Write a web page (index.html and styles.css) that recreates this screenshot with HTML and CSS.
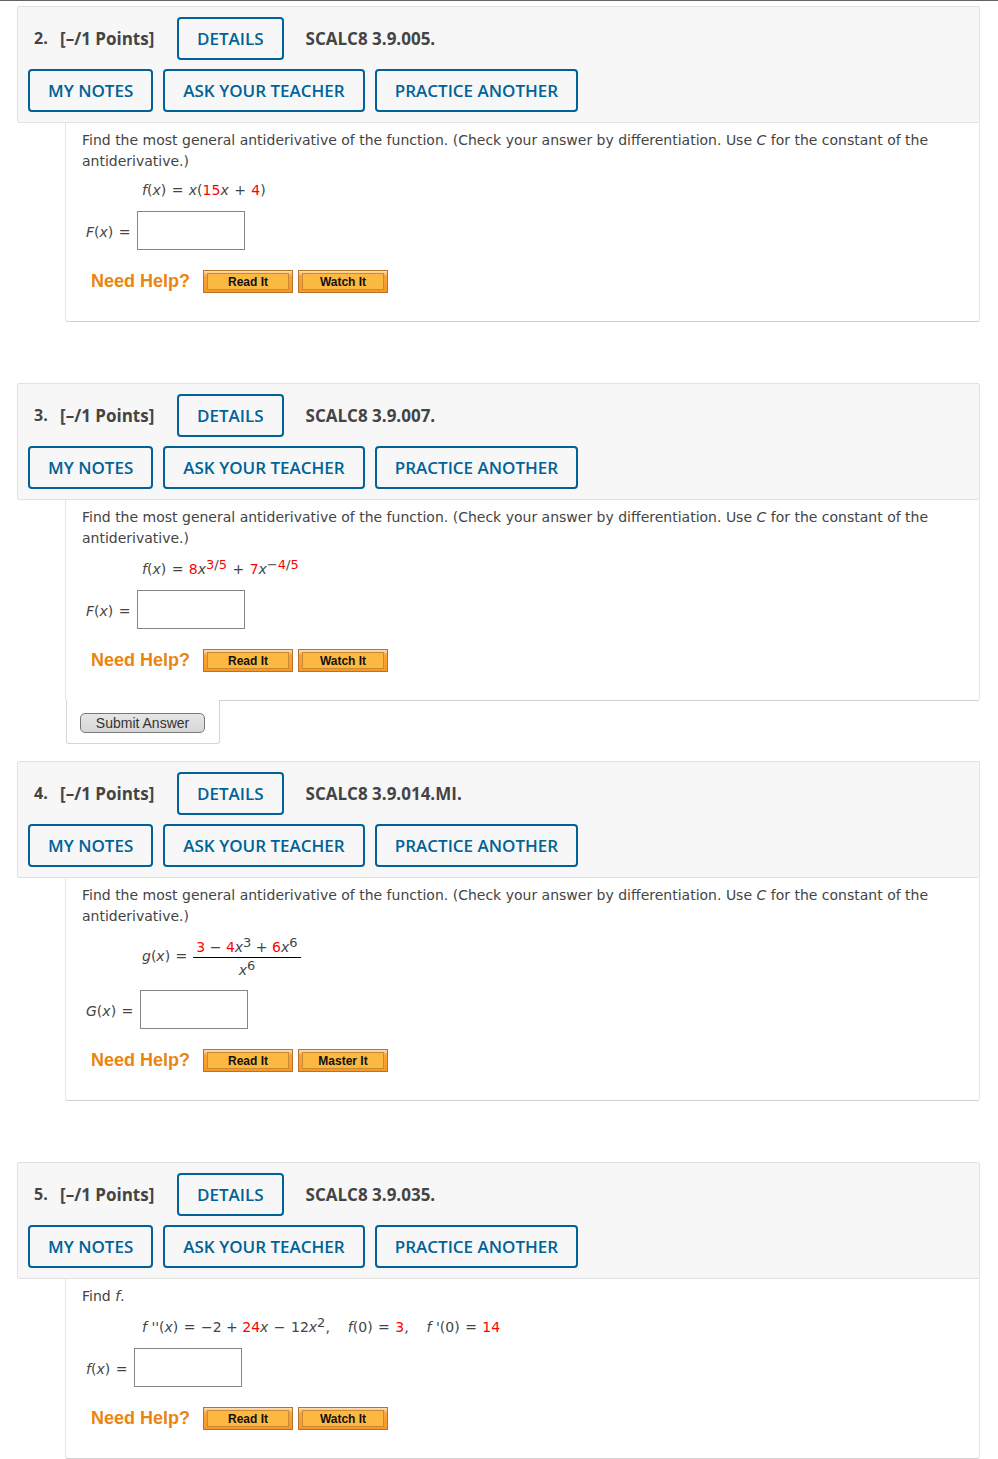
FILE: index.html
```
<!DOCTYPE html>
<html lang="en">
<head>
<meta charset="utf-8">
<title>Antiderivatives</title>
<link rel="stylesheet" href="styles.css">
</head>
<body>
<main class="assignment">

<section class="question">
  <header class="question-header">
    <div class="header-row">
      <h2 class="title"><span class="number">2.</span><span class="points">[–/1 Points]</span></h2>
      <button class="action details" type="button">DETAILS</button>
      <span class="source">SCALC8 3.9.005.</span>
    </div>
    <div class="header-row">
      <button class="action" type="button">MY NOTES</button>
      <button class="action" type="button">ASK YOUR TEACHER</button>
      <button class="action" type="button">PRACTICE ANOTHER</button>
    </div>
  </header>
  <div class="question-body">
    <p class="prompt">Find the most general antiderivative of the function. (Check your answer by differentiation. Use <i>C</i> for the constant of the antiderivative.)</p>
    <p class="math"><i>f</i>(<i>x</i>) <span class="op">=</span> <i>x</i>(<b>15</b><i>x</i> <span class="op">+</span> <b>4</b>)</p>
    <div class="answer"><label for="a2"><i>F</i>(<i>x</i>) <span class="op">=</span></label><input id="a2" type="text"></div>
    <div class="help"><span class="help-label">Need Help?</span><button class="help-button" type="button">Read It</button><button class="help-button" type="button">Watch It</button></div>
  </div>
</section>

<section class="question has-submit">
  <header class="question-header">
    <div class="header-row">
      <h2 class="title"><span class="number">3.</span><span class="points">[–/1 Points]</span></h2>
      <button class="action details" type="button">DETAILS</button>
      <span class="source">SCALC8 3.9.007.</span>
    </div>
    <div class="header-row">
      <button class="action" type="button">MY NOTES</button>
      <button class="action" type="button">ASK YOUR TEACHER</button>
      <button class="action" type="button">PRACTICE ANOTHER</button>
    </div>
  </header>
  <div class="question-body">
    <p class="prompt">Find the most general antiderivative of the function. (Check your answer by differentiation. Use <i>C</i> for the constant of the antiderivative.)</p>
    <p class="math powers"><i>f</i>(<i>x</i>) <span class="op">=</span> <b>8</b><i>x</i><sup><b>3</b>/<b>5</b></sup> <span class="op">+</span> <b>7</b><i>x</i><sup>−<b>4</b>/<b>5</b></sup></p>
    <div class="answer"><label for="a3"><i>F</i>(<i>x</i>) <span class="op">=</span></label><input id="a3" type="text"></div>
    <div class="help"><span class="help-label">Need Help?</span><button class="help-button" type="button">Read It</button><button class="help-button" type="button">Watch It</button></div>
  </div>
  <div class="submit-panel"><button class="submit" type="button">Submit Answer</button></div>
</section>

<section class="question">
  <header class="question-header">
    <div class="header-row">
      <h2 class="title"><span class="number">4.</span><span class="points">[–/1 Points]</span></h2>
      <button class="action details" type="button">DETAILS</button>
      <span class="source">SCALC8 3.9.014.MI.</span>
    </div>
    <div class="header-row">
      <button class="action" type="button">MY NOTES</button>
      <button class="action" type="button">ASK YOUR TEACHER</button>
      <button class="action" type="button">PRACTICE ANOTHER</button>
    </div>
  </header>
  <div class="question-body">
    <p class="prompt">Find the most general antiderivative of the function. (Check your answer by differentiation. Use <i>C</i> for the constant of the antiderivative.)</p>
    <p class="math with-fraction"><span class="left-side"><i>g</i>(<i>x</i>) <span class="op">=</span></span><span class="fraction"><span class="numerator"><b>3</b> − <b>4</b><i>x</i><sup>3</sup> + <b>6</b><i>x</i><sup>6</sup></span><span class="denominator"><i>x</i><sup>6</sup></span></span></p>
    <div class="answer"><label for="a4"><i>G</i>(<i>x</i>) <span class="op">=</span></label><input id="a4" type="text"></div>
    <div class="help"><span class="help-label">Need Help?</span><button class="help-button" type="button">Read It</button><button class="help-button" type="button">Master It</button></div>
  </div>
</section>

<section class="question">
  <header class="question-header">
    <div class="header-row">
      <h2 class="title"><span class="number">5.</span><span class="points">[–/1 Points]</span></h2>
      <button class="action details" type="button">DETAILS</button>
      <span class="source">SCALC8 3.9.035.</span>
    </div>
    <div class="header-row">
      <button class="action" type="button">MY NOTES</button>
      <button class="action" type="button">ASK YOUR TEACHER</button>
      <button class="action" type="button">PRACTICE ANOTHER</button>
    </div>
  </header>
  <div class="question-body">
    <p class="prompt">Find <i>f</i>.</p>
    <p class="math powers conditions"><span><i>f ''</i>(<i>x</i>) <span class="op">=</span> −2 + <b>24</b><i>x</i> <span class="op">−</span> 12<i>x</i><sup>2</sup>,</span><span><i>f</i>(0) <span class="op">=</span> <b>3</b>,</span><span><i>f '</i>(0) <span class="op">=</span> <b>14</b></span></p>
    <div class="answer"><label for="a5"><i>f</i>(<i>x</i>) <span class="op">=</span></label><input id="a5" type="text"></div>
    <div class="help"><span class="help-label">Need Help?</span><button class="help-button" type="button">Read It</button><button class="help-button" type="button">Watch It</button></div>
  </div>
</section>

</main>
</body>
</html>
```
FILE: styles.css
```
* {
  box-sizing: border-box;
}

body {
  margin: 0;
  background: #fff;
  color: #444;
  font: 14px/21px Verdana, "DejaVu Sans", sans-serif;
}

.assignment {
  border-top: 1px solid #636363;
  padding: 5px 18px 0 17px;
}

.question {
  margin-bottom: 61px;
}

.question:last-child {
  margin-bottom: 0;
}

.question.has-submit {
  margin-bottom: 17px;
}

.question-header {
  display: flex;
  flex-direction: column;
  gap: 9px;
  padding: 10px;
  border: 1px solid #e2e2e2;
  border-radius: 2px;
  background: #f7f7f7;
  font-family: "Open Sans", sans-serif;
}

.header-row {
  display: flex;
  align-items: center;
  gap: 10px;
}

.title {
  display: flex;
  width: 139px;
  margin: 0;
  padding-left: 6px;
  font-size: 17px;
}

.number {
  width: 26px;
  font-size: 16px;
}

.source {
  padding-left: 12px;
  font-size: 17px;
  font-weight: 700;
}

.action {
  height: 43px;
  padding: 0 18px;
  border: 2px solid #006298;
  border-radius: 4px;
  background: transparent;
  color: #006298;
  font: 600 17px "Open Sans", sans-serif;
}

.question-body {
  margin-left: 48px;
  padding: 7px 16px 28px;
  border: 1px solid #e6e6e6;
  border-top: 0;
  border-bottom-color: #d0d0d0;
  border-radius: 0 0 3px 3px;
}

.prompt {
  margin: 0;
}

.math {
  margin: 8px 0 10px 60px;
}

.math b {
  color: #f00;
  font-weight: 400;
}

.math.powers {
  margin-top: 10px;
}

.op {
  margin: 0 1px;
}

sup {
  font-size: 13px;
  line-height: 0;
  vertical-align: 5px;
}

.with-fraction {
  display: flex;
  align-items: center;
  gap: 5px;
}

.left-side {
  padding-bottom: 2px;
}

.fraction {
  display: flex;
  flex-direction: column;
  line-height: 19px;
  text-align: center;
}

.numerator {
  padding: 3px 3px 0;
  border-bottom: 1px solid #000;
}

.denominator {
  padding-top: 3px;
}

.conditions {
  display: flex;
  gap: 18px;
}

.answer {
  display: flex;
  align-items: center;
  gap: 6px;
  padding-left: 4px;
}

.answer label {
  padding-top: 3px;
}

.answer input {
  width: 108px;
  height: 39px;
  padding: 2px 8px;
  border: 1px solid #858585;
  background: #fff;
  color: #444;
  font: inherit;
}

.help {
  display: flex;
  align-items: center;
  gap: 5px;
  margin-top: 20px;
  padding-left: 9px;
}

.help-label {
  width: 107px;
  color: #ea8511;
  font: 700 18px/23px "Liberation Sans", Arial, sans-serif;
}

.help-button {
  width: 90px;
  height: 23px;
  padding: 0;
  border: 1px solid #b5732c;
  background: linear-gradient(#fcb941, #fcb941) center / 80px 15px no-repeat,
    linear-gradient(#c98a32, #c98a32) center / 82px 17px no-repeat,
    linear-gradient(#ffe0bb, #f9a33c 5px, #f89728);
  color: #111;
  font: 700 12px "Liberation Sans", Arial, sans-serif;
}

.submit-panel {
  width: fit-content;
  margin: -1px 0 0 49px;
  padding: 13px 14px 10px 13px;
  border: 1px solid #d5d5d5;
  border-width: 0 1px 1px;
  border-radius: 0 0 3px 3px;
  background: #fff;
}

.submit {
  display: block;
  width: 125px;
  height: 20px;
  padding: 0;
  border: 1px solid #777;
  border-radius: 5px;
  background: linear-gradient(#e6e6e6, #d6d6d6);
  color: #333;
  font: 14px/16px "Liberation Sans", Arial, sans-serif;
}
```
